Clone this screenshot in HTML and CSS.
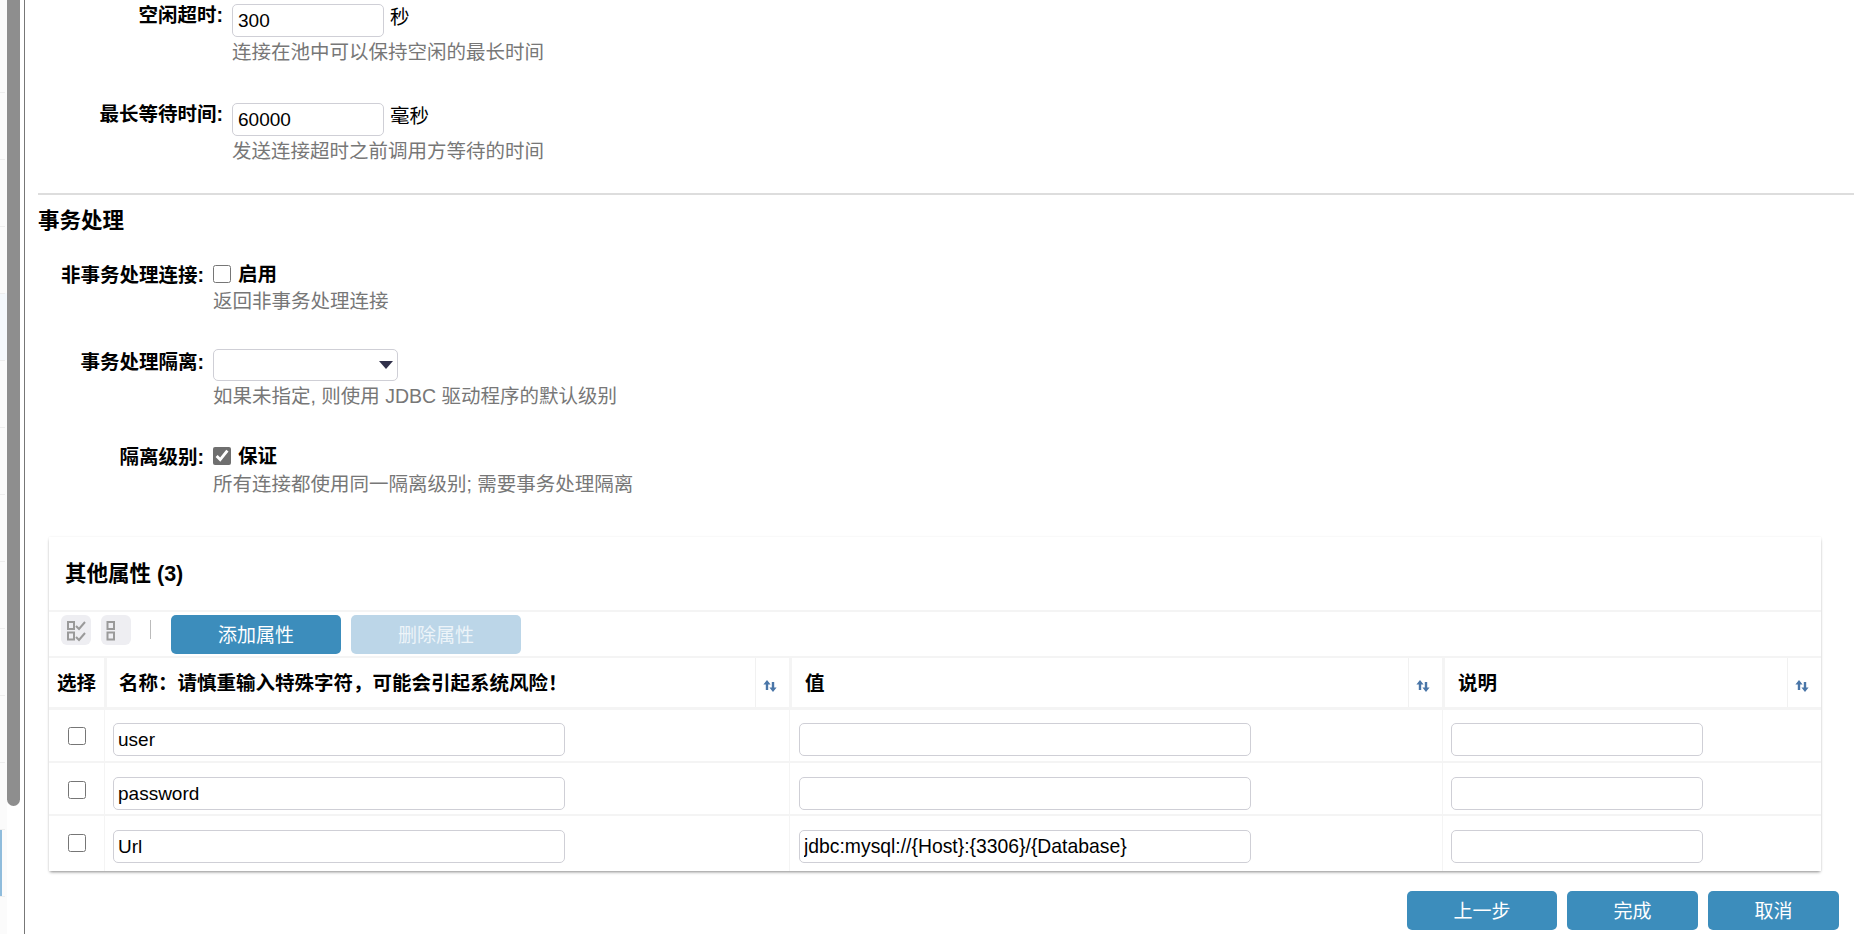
FILE: index.html
```html
<!DOCTYPE html>
<html lang="zh">
<head>
<meta charset="utf-8">
<title>连接属性</title>
<link rel="stylesheet" href="styles.css">
</head>
<body>
<div class="page">
  <aside class="rail">
    <div class="rail-strip"><div class="rail-mark"></div></div>
    <div class="rail-thumb"></div>
  </aside>
  <main class="main">
    <section class="form form-pool">
      <div class="field">
        <label class="field-label">空闲超时:</label>
        <div class="field-body">
          <div class="with-unit"><input class="text num" type="text" value="300"><span class="unit">秒</span></div>
          <p class="desc">连接在池中可以保持空闲的最长时间</p>
        </div>
      </div>
      <div class="field">
        <label class="field-label">最长等待时间:</label>
        <div class="field-body">
          <div class="with-unit"><input class="text num" type="text" value="60000"><span class="unit">毫秒</span></div>
          <p class="desc">发送连接超时之前调用方等待的时间</p>
        </div>
      </div>
    </section>
    <hr class="rule">
    <section class="form form-tx">
      <h2 class="section-title">事务处理</h2>
      <div class="field">
        <label class="field-label field-label-check">非事务处理连接:</label>
        <div class="field-body">
          <label class="check-line"><input class="check" type="checkbox"><span>启用</span></label>
          <p class="desc desc-tight">返回非事务处理连接</p>
        </div>
      </div>
      <div class="field field-select">
        <label class="field-label">事务处理隔离:</label>
        <div class="field-body">
          <div class="select-wrap"><select class="select"><option></option></select></div>
          <p class="desc">如果未指定, 则使用 JDBC 驱动程序的默认级别</p>
        </div>
      </div>
      <div class="field">
        <label class="field-label field-label-check">隔离级别:</label>
        <div class="field-body">
          <label class="check-line"><input class="check" type="checkbox" checked><span>保证</span></label>
          <p class="desc">所有连接都使用同一隔离级别; 需要事务处理隔离</p>
        </div>
      </div>
    </section>
    <section class="panel">
      <h3 class="panel-title">其他属性 (3)</h3>
      <div class="toolbar">
        <button class="icon-btn" type="button" aria-label="全选">
          <svg width="24" height="24" viewBox="0 0 24 24" fill="none" stroke="#9a9a9a" stroke-width="2"><rect x="4" y="4" width="6" height="7"/><rect x="4" y="14.5" width="6" height="7"/><path d="M12 8l3 3 6-7M12 19l3 3 6-7"/></svg>
        </button>
        <button class="icon-btn" type="button" aria-label="取消全选">
          <svg width="24" height="24" viewBox="0 0 24 24" fill="none" stroke="#9a9a9a" stroke-width="2"><rect x="3.5" y="4" width="6.5" height="7"/><rect x="3.5" y="14.5" width="6.5" height="7"/></svg>
        </button>
        <span class="sep"></span>
        <button class="btn" type="button">添加属性</button>
        <button class="btn btn-off" type="button">删除属性</button>
      </div>
      <table class="grid">
        <colgroup><col class="c-sel"><col class="c-name"><col class="c-val"><col class="c-note"></colgroup>
        <thead>
          <tr>
            <th class="th-sel">选择</th>
            <th><div class="th-in"><span class="th-text th-text-name">名称：请慎重输入特殊字符，可能会引起系统风险！</span><span class="sort"><svg width="14" height="14" viewBox="0 0 14 14" fill="#4a76a8"><path d="M4 1l3.6 4.4H5.2V11H2.8V5.4H.4zM10 13l3.6-4.4h-2.4V3H8.8v5.6H6.4z"/></svg></span></div></th>
            <th><div class="th-in"><span class="th-text">值</span><span class="sort"><svg width="14" height="14" viewBox="0 0 14 14" fill="#4a76a8"><path d="M4 1l3.6 4.4H5.2V11H2.8V5.4H.4zM10 13l3.6-4.4h-2.4V3H8.8v5.6H6.4z"/></svg></span></div></th>
            <th><div class="th-in"><span class="th-text">说明</span><span class="sort"><svg width="14" height="14" viewBox="0 0 14 14" fill="#4a76a8"><path d="M4 1l3.6 4.4H5.2V11H2.8V5.4H.4zM10 13l3.6-4.4h-2.4V3H8.8v5.6H6.4z"/></svg></span></div></th>
          </tr>
        </thead>
        <tbody>
          <tr>
            <td class="td-sel"><input class="check" type="checkbox"></td>
            <td class="td-name"><input class="text w-name" type="text" value="user"></td>
            <td class="td-val"><input class="text w-val" type="text"></td>
            <td class="td-note"><input class="text w-note" type="text"></td>
          </tr>
          <tr>
            <td class="td-sel"><input class="check" type="checkbox"></td>
            <td class="td-name"><input class="text w-name" type="text" value="password"></td>
            <td class="td-val"><input class="text w-val" type="text"></td>
            <td class="td-note"><input class="text w-note" type="text"></td>
          </tr>
          <tr>
            <td class="td-sel"><input class="check" type="checkbox"></td>
            <td class="td-name"><input class="text w-name" type="text" value="Url"></td>
            <td class="td-val"><input class="text w-val" type="text" value="jdbc:mysql://{Host}:{3306}/{Database}"></td>
            <td class="td-note"><input class="text w-note" type="text"></td>
          </tr>
        </tbody>
      </table>
    </section>
    <footer class="actions">
      <button class="btn btn-prev" type="button">上一步</button>
      <button class="btn btn-done" type="button">完成</button>
      <button class="btn btn-cancel" type="button">取消</button>
    </footer>
  </main>
</div>
</body>
</html>
```
FILE: styles.css
```css
* { box-sizing: border-box; }
html, body { margin: 0; height: 100%; overflow: hidden; background: #fff; }
body {
  font-family: "Liberation Sans", "Noto Sans CJK SC", sans-serif;
  font-size: 19.5px;
  color: #000;
}
.page { display: flex; height: 934px; }

.rail { flex: 0 0 25px; display: flex; align-items: flex-start; border-right: 1px solid #777; height: 100%; }
.rail-strip {
  flex: 0 0 7px;
  height: 100%;
  background:
    repeating-linear-gradient(to bottom, transparent 0, transparent 66px, #eeeeee 66px, #eeeeee 67px) 0 26px / 5px 100% no-repeat,
    linear-gradient(to bottom, #fbfbfb 293px, #f4f8fc 293px, #f4f8fc 360px, #fbfbfb 360px);
}
.rail-mark { width: 2px; height: 66px; margin-top: 830px; background: #8fbcdc; }
.rail-thumb { flex: 0 0 13px; height: 806px; background: #8e8e8e; border-radius: 0 0 7px 7px; }

.main { flex: 1; min-width: 0; padding-top: 4px; display: flex; flex-direction: column; }

.form { padding-left: 13px; }
.field { display: grid; column-gap: 9px; }
.form-pool .field { grid-template-columns: 185px 1fr; margin-bottom: 38px; }
.form-pool .field:last-child { margin-bottom: 0; }
.form-tx .field { grid-template-columns: 166px 1fr; margin-bottom: 35px; }
.form-tx .field-select { margin-bottom: 34px; }
.field-label { font-weight: bold; text-align: right; line-height: 22px; }
.form-tx .field-label { line-height: 26px; }
.form-tx .field-label-check { line-height: 28px; }
.with-unit { display: flex; gap: 6px; align-items: flex-start; }
.unit { line-height: 26px; }
.desc { margin: 2px 0 0; line-height: 26px; color: #777; }
.desc-tight { margin-top: 1px; }
.rule { margin: 29px 0 0 13px; border: 0; height: 2px; background: #ddd; }
.section-title { margin: 13px 0 27px; font-size: 21.5px; line-height: 26px; font-weight: bold; }

.text {
  height: 33px;
  padding: 0 4px;
  border: 1px solid #cfcfd6;
  border-radius: 5px;
  background: #fff;
  font: 19px "Liberation Sans", "Noto Sans CJK SC", sans-serif;
  color: #000;
  outline: none;
}
.num { width: 152px; padding-left: 5px; }
.check { width: 18px; height: 18px; margin: 0; accent-color: #6f6f6f; }
.check-line { display: flex; align-items: center; gap: 7px; font-weight: bold; line-height: 26px; }
.select-wrap { position: relative; width: 185px; height: 32px; }
.select-wrap::after {
  content: "";
  position: absolute;
  right: 5px;
  top: 12px;
  border-style: solid;
  border-width: 8px 7px 0;
  border-color: #30304a transparent transparent;
}
.select {
  display: block;
  width: 100%;
  height: 100%;
  border: 1px solid #cfcfd6;
  border-radius: 5px;
  background: #fff;
  appearance: none;
  outline: none;
}
.form-tx .field:last-child { margin-bottom: 0; }

.panel {
  margin: 40px 33px 0 24px;
  background: #fff;
  box-shadow: 0 2px 3px -1px rgba(0, 0, 0, .45), 0 0 2px rgba(0, 0, 0, .07);
}
.panel-title {
  margin: 0;
  height: 73px;
  padding: 0 0 4px 16px;
  display: flex;
  align-items: center;
  font-size: 21.5px;
  font-weight: bold;
}
.toolbar {
  display: flex;
  align-items: flex-start;
  height: 48px;
  padding: 3px 0 0 12px;
  border-top: 2px solid #f4f4f4;
  border-bottom: 2px solid #f4f4f4;
}
.icon-btn {
  flex: 0 0 30px;
  height: 30px;
  margin-right: 10px;
  padding: 0;
  border: 0;
  border-radius: 6px;
  background: #eeeef2;
  display: flex;
  align-items: center;
  justify-content: center;
}
.sep { flex: 0 0 1px; height: 19px; margin: 5px 20px 0 9px; background: #bbb; }
.btn {
  height: 39px;
  padding: 0 0 2px;
  border: 0;
  border-radius: 5px;
  background: #3c8dbc;
  color: #fff;
  font: 19px "Liberation Sans", "Noto Sans CJK SC", sans-serif;
}
.toolbar .btn { flex: 0 0 170px; margin-right: 10px; }
.btn-off { background: #bcd6e8; color: #edf4f9; }

.grid { width: 100%; table-layout: fixed; border-collapse: separate; border-spacing: 0; }
.c-sel { width: 55px; }
.c-name { width: 685px; }
.c-val { width: 653px; }
.grid th {
  height: 52px;
  padding: 0;
  border-left: 3px solid #f4f4f4;
  border-bottom: 3px solid #f4f4f4;
  text-align: left;
  font-size: 19.5px;
  font-weight: bold;
}
.grid th.th-sel { border-left: 0; text-align: center; padding-bottom: 2px; }
.th-in { display: flex; height: 49px; align-items: stretch; }
.th-text { flex: 1; padding-left: 13px; line-height: 50px; white-space: nowrap; }
.th-text-name { padding-left: 12px; }
.sort {
  flex: 0 0 34px;
  border-left: 1px solid #f1f1f1;
  display: flex;
  align-items: center;
  justify-content: center;
  padding: 6px 6px 0 0;
}
.grid td {
  height: 53px;
  padding: 13px 0 0;
  vertical-align: top;
  border-left: 1px solid #f4f4f4;
  border-bottom: 2px solid #f4f4f4;
}
.grid tr:last-child td { height: 55px; border-bottom: 0; padding-top: 14px; }
.grid tr:nth-child(2) td { padding-top: 14px; }
.grid td.td-name { padding-left: 8px; }
.grid td.td-val { padding-left: 9px; }
.grid td.td-note { padding-left: 8px; }
.grid td.td-sel { border-left: 0; padding: 17px 0 0; text-align: center; }
.grid tr:nth-child(2) td.td-sel { padding-top: 18px; }
.grid tr:last-child td.td-sel { padding-top: 18px; }
.w-name { width: 452px; }
.w-val { width: 452px; font-size: 19.35px; }
.w-note { width: 252px; }

.actions { display: flex; justify-content: flex-end; gap: 10px; margin-top: 20px; padding-right: 15px; }
.btn-prev { width: 150px; }
.btn-done { width: 131px; }
.btn-cancel { width: 131px; }
```
